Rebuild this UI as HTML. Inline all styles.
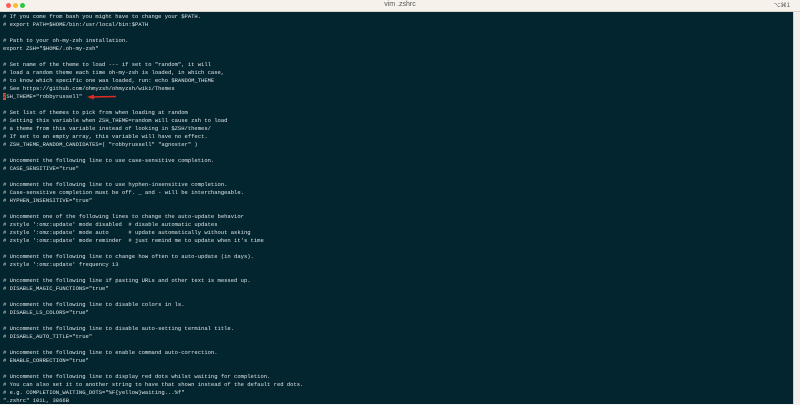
<!DOCTYPE html>
<html><head><meta charset="utf-8"><style>
html,body{margin:0;padding:0;width:800px;height:404px;overflow:hidden;background:#f5f1ee}
.bar{position:absolute;left:0;top:0;width:800px;height:11px;background:#f7f1ec;border-bottom:1px solid #d8d2cd}
.dot{position:absolute;top:3px;width:5px;height:5px;border-radius:50%}
.title{position:absolute;left:0;width:800px;top:1px;text-align:center;font:7px "Liberation Sans",sans-serif;color:#555}
.kb{position:absolute;right:10px;top:2px;font:6px "Liberation Sans","DejaVu Sans",sans-serif;color:#555}
.term{position:absolute;left:0;top:12px;width:793px;height:392px;background:#032530}
.side{position:absolute;left:793px;top:12px;width:7px;height:392px;background:#f2eeeb;border-left:1px solid #d5d0cc}
pre{position:absolute;left:3px;top:1px;margin:0;font-family:"Liberation Mono",monospace;font-size:5.5px;line-height:8px;color:#dfe6e6;white-space:pre}
.cur{background:#d8562e;color:#032530}
</style></head><body>
<div class="bar">
<div class="dot" style="left:6px;background:#fe5f57"></div>
<div class="dot" style="left:13px;background:#febc2e"></div>
<div class="dot" style="left:20px;background:#28c840"></div>
<div class="title">vim .zshrc</div>
<div class="kb">⌥⌘1</div>
</div>
<div class="term">
<pre># If you come from bash you might have to change your $PATH.
# export PATH=$HOME/bin:/usr/local/bin:$PATH

# Path to your oh-my-zsh installation.
export ZSH="$HOME/.oh-my-zsh"

# Set name of the theme to load --- if set to "random", it will
# load a random theme each time oh-my-zsh is loaded, in which case,
# to know which specific one was loaded, run: echo $RANDOM_THEME
# See https://github.com/ohmyzsh/ohmyzsh/wiki/Themes
<span class="cur">Z</span>SH_THEME="robbyrussell"

# Set list of themes to pick from when loading at random
# Setting this variable when ZSH_THEME=random will cause zsh to load
# a theme from this variable instead of looking in $ZSH/themes/
# If set to an empty array, this variable will have no effect.
# ZSH_THEME_RANDOM_CANDIDATES=( "robbyrussell" "agnoster" )

# Uncomment the following line to use case-sensitive completion.
# CASE_SENSITIVE="true"

# Uncomment the following line to use hyphen-insensitive completion.
# Case-sensitive completion must be off. _ and - will be interchangeable.
# HYPHEN_INSENSITIVE="true"

# Uncomment one of the following lines to change the auto-update behavior
# zstyle ':omz:update' mode disabled  # disable automatic updates
# zstyle ':omz:update' mode auto      # update automatically without asking
# zstyle ':omz:update' mode reminder  # just remind me to update when it's time

# Uncomment the following line to change how often to auto-update (in days).
# zstyle ':omz:update' frequency 13

# Uncomment the following line if pasting URLs and other text is messed up.
# DISABLE_MAGIC_FUNCTIONS="true"

# Uncomment the following line to disable colors in ls.
# DISABLE_LS_COLORS="true"

# Uncomment the following line to disable auto-setting terminal title.
# DISABLE_AUTO_TITLE="true"

# Uncomment the following line to enable command auto-correction.
# ENABLE_CORRECTION="true"

# Uncomment the following line to display red dots whilst waiting for completion.
# You can also set it to another string to have that shown instead of the default red dots.
# e.g. COMPLETION_WAITING_DOTS="%F{yellow}waiting...%f"
".zshrc" 101L, 3866B</pre>
<svg style="position:absolute;left:86px;top:81px" width="32" height="8"><line x1="6" y1="4" x2="30" y2="3.5" stroke="#e02a20" stroke-width="1.4"/><path d="M1 4 L8 1.5 L8 6.5 Z" fill="#e02a20"/></svg>
</div>
<div class="side"></div>
</body></html>
